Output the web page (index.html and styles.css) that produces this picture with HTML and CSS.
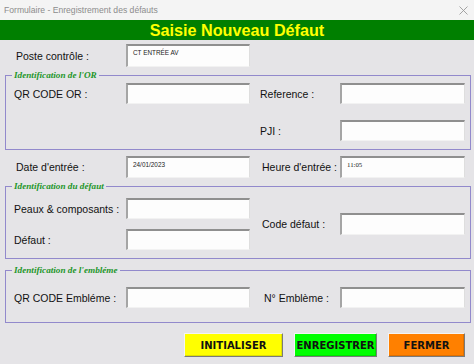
FILE: index.html
```html
<!DOCTYPE html>
<html lang="fr">
<head>
<meta charset="utf-8">
<title>Formulaire - Enregistrement des défauts</title>
<link rel="stylesheet" href="styles.css">
</head>
<body>
<div class="window">
  <div class="titlebar">
    <span class="title-text">Formulaire - Enregistrement des défauts</span>
    <svg class="close" width="9" height="9" viewBox="0 0 9 9"><path d="M0.5 0.5 L8.5 8.5 M8.5 0.5 L0.5 8.5" stroke="#9a9a9a" stroke-width="0.9" fill="none"/></svg>
  </div>
  <div class="banner">Saisie Nouveau Défaut</div>
  <div class="form">
    <div class="row row-poste">
      <span class="lbl">Poste contrôle :</span>
      <div class="field tall"><span class="val">CT ENTRÉE AV</span></div>
    </div>

    <fieldset class="group g-or">
      <legend>Identification de l'OR</legend>
      <div class="grid grid-or">
        <span class="lbl">QR CODE OR :</span>
        <div class="field"></div>
        <span class="lbl lbl-r">Reference :</span>
        <div class="field"></div>
        <span class="lbl lbl-r r2c3">PJI :</span>
        <div class="field r2c4"></div>
      </div>
    </fieldset>

    <div class="row row-date">
      <span class="lbl">Date d'entrée :</span>
      <div class="field mid"><span class="val">24/01/2023</span></div>
      <span class="lbl lbl-r2">Heure d'entrée :</span>
      <div class="field mid"><span class="val serif">11:05</span></div>
    </div>

    <fieldset class="group g-def">
      <legend>Identification du défaut</legend>
      <div class="grid grid-def">
        <span class="lbl d-l1">Peaux &amp; composants :</span>
        <div class="field d-f1"></div>
        <span class="lbl d-l2">Défaut :</span>
        <div class="field d-f2"></div>
        <span class="lbl lbl-r2 d-l3">Code défaut :</span>
        <div class="field mid d-f3"></div>
      </div>
    </fieldset>

    <fieldset class="group g-emb">
      <legend>Identification de l'embléme</legend>
      <div class="grid grid-emb">
        <span class="lbl">QR CODE Embléme :</span>
        <div class="field"></div>
        <span class="lbl lbl-r3">N° Emblème :</span>
        <div class="field"></div>
      </div>
    </fieldset>

    <div class="buttons">
      <button class="btn btn-init">INITIALISER</button>
      <button class="btn btn-save">ENREGISTRER</button>
      <button class="btn btn-close">FERMER</button>
    </div>
  </div>
</div>
</body>
</html>
```
FILE: styles.css
```css
html, body {
  margin: 0;
  padding: 0;
}
body {
  width: 474px;
  height: 364px;
  overflow: hidden;
  background: #e5e4e7;
  font-family: "Liberation Sans", Arial, sans-serif;
}
.window {
  width: 474px;
  height: 364px;
  background: #e5e4e7;
}
.titlebar {
  height: 20px;
  background: #f4f4f4;
  display: flex;
  align-items: center;
  justify-content: space-between;
  padding: 0 6px 0 4px;
  box-sizing: border-box;
}
.title-text {
  font-size: 8.6px;
  color: #8c8c8c;
}
.close {
  display: block;
  margin-top: 1px;
}
.banner {
  height: 20px;
  line-height: 21px;
  background: #007f00;
  color: #ffff00;
  text-align: center;
  font-weight: bold;
  font-size: 16.2px;
}
.form {
  padding-top: 4px;
}
.lbl {
  font-size: 10.5px;
  color: #111;
  align-self: center;
  white-space: nowrap;
}
.row {
  display: grid;
  grid-template-columns: 110px 124px 90px 125px;
  margin-left: 16px;
}
.row-poste {
  height: 23px;
}
.row-date {
  height: 22px;
  margin-top: 6px;
}
.field {
  background: #fdfdfd;
  border-top: 2px solid #8f8f8f;
  border-left: 2px solid #a5a5a5;
  border-right: 1px solid #dedede;
  border-bottom: 1px solid #f2f2f2;
  box-sizing: border-box;
  height: 21px;
}
.field.tall {
  height: 23px;
}
.field.mid {
  height: 22px;
}
.val {
  display: block;
  font-size: 6.4px;
  color: #222;
  padding: 3px 0 0 5px;
  line-height: 8px;
}
.val.serif {
  font-family: "Liberation Serif", "Times New Roman", serif;
  font-size: 6.8px;
}
.lbl-r {
  padding-left: 10px;
}
.lbl-r2 {
  padding-left: 12px;
}
.lbl-r3 {
  padding-left: 14px;
}
.group {
  margin: 3px 3px 0 5px;
  border: 1px solid #9289cc;
  padding: 0 4px 8px 8px;
  min-width: 0;
}
.group legend {
  font-family: "Liberation Serif", "Times New Roman", serif;
  font-style: italic;
  font-weight: bold;
  font-size: 9.2px;
  line-height: 10px;
  color: #23962a;
  padding: 0 2px;
  margin-left: -2px;
}
.grid {
  display: grid;
  grid-template-columns: 112px 124px 90px 125px;
}
.grid-or {
  grid-template-rows: 21px 21px;
  row-gap: 16px;
  padding-top: 3px;
}
.r2c3 {
  grid-row: 2;
  grid-column: 3;
}
.r2c4 {
  grid-row: 2;
  grid-column: 4;
}
.g-def {
  margin-top: 3px;
}
.grid-def {
  grid-template-rows: 21px 21px;
  row-gap: 10px;
  padding-top: 7px;
}
.d-l1 { grid-row: 1; grid-column: 1; }
.d-f1 { grid-row: 1; grid-column: 2; }
.d-l2 { grid-row: 2; grid-column: 1; }
.d-f2 { grid-row: 2; grid-column: 2; }
.d-l3 { grid-row: 1 / span 2; grid-column: 3; }
.d-f3 { grid-row: 1 / span 2; grid-column: 4; align-self: center; }
.g-emb {
  margin-top: 6px;
  padding-bottom: 14px;
}
.grid-emb {
  grid-template-rows: 21px;
  padding-top: 12px;
}
.buttons {
  display: flex;
  justify-content: flex-end;
  gap: 11px;
  padding-right: 9px;
  margin-top: 10px;
}
.btn {
  height: 24px;
  font-family: "DejaVu Sans", Verdana, sans-serif;
  font-weight: bold;
  font-size: 10px;
  color: #111;
  border-top: 1px solid #f4f4f4;
  border-left: 1px solid #f4f4f4;
  border-right: 1px solid #7a7a7a;
  border-bottom: 1px solid #7a7a7a;
  padding: 0;
  box-shadow: inset -1px -1px 0 rgba(0,0,0,0.12);
}
.btn-init {
  width: 99px;
  background: #ffff00;
}
.btn-save {
  width: 83px;
  background: #00ff00;
}
.btn-close {
  width: 77px;
  background: #ff8000;
}
```
